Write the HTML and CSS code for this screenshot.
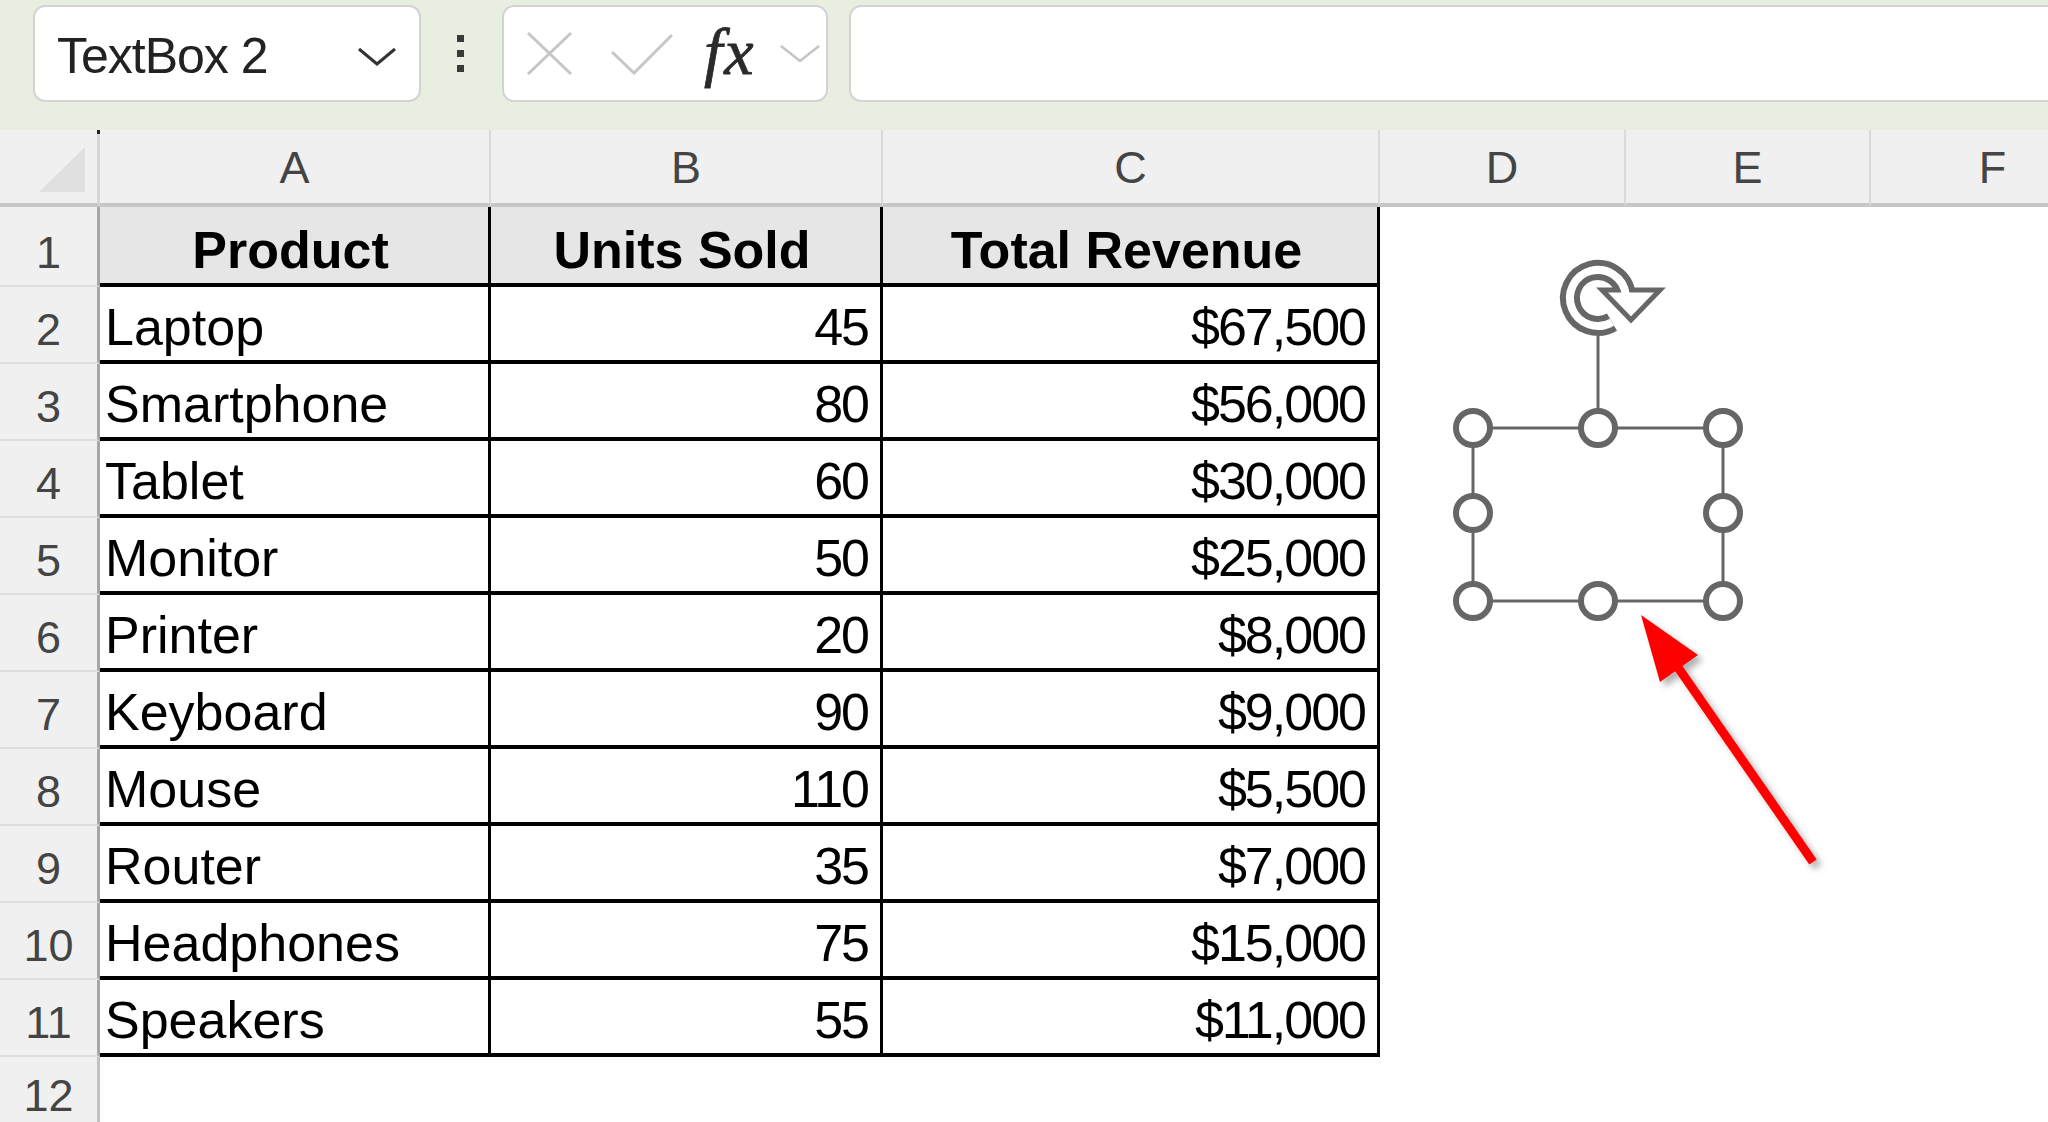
FILE: index.html
```html
<!DOCTYPE html>
<html lang="en">
<head>
    <meta charset="UTF-8">
    <meta name="viewport" content="width=device-width, initial-scale=1.0">
    <title>Sales sheet</title>
    <link rel="stylesheet" href="styles.css">
</head>
<body>
<div class="app">
    <div class="toolbar">
        <div class="namebox">
            <span>TextBox 2</span>
            <svg width="44" height="22" viewBox="0 0 44 22"><polyline points="4,4 22,19 40,4" fill="none" stroke="#333" stroke-width="3"/></svg>
        </div>
        <div class="dots"><span></span><span></span><span></span></div>
        <div class="fxbox">
            <svg width="47" height="45" viewBox="0 0 47 45"><path d="M2 2 L45 43 M45 2 L2 43" stroke="#c6c6c6" stroke-width="3" fill="none"/></svg>
            <svg class="ok" width="62" height="42" viewBox="0 0 62 42"><polyline points="1,19 23,40 61,2" fill="none" stroke="#c6c6c6" stroke-width="3"/></svg>
            <span class="fx">fx</span>
            <svg class="more" width="40" height="19" viewBox="0 0 40 19"><polyline points="1,2 20,17 39,2" fill="none" stroke="#c4c4c4" stroke-width="2.5"/></svg>
        </div>
        <div class="formula"></div>
    </div>

    <div class="sheet">
        <div class="row colhead">
            <div class="corner"><svg width="46" height="45" viewBox="0 0 46 45"><polygon points="46,0 46,45 0,45" fill="#e0e0e0"/></svg></div>
            <div>A</div><div>B</div><div>C</div><div>D</div><div>E</div><div>F</div>
        </div>
        <div class="row first">
            <div class="rh">1</div>
            <div class="c hd">Product</div><div class="c hd">Units Sold</div><div class="c hd">Total Revenue</div>
            <div></div><div></div><div></div>
        </div>
        <div class="row">
            <div class="rh">2</div>
            <div class="c">Laptop</div><div class="c num">45</div><div class="c num">$67,500</div>
            <div></div><div></div><div></div>
        </div>
        <div class="row">
            <div class="rh">3</div>
            <div class="c">Smartphone</div><div class="c num">80</div><div class="c num">$56,000</div>
            <div></div><div></div><div></div>
        </div>
        <div class="row">
            <div class="rh">4</div>
            <div class="c">Tablet</div><div class="c num">60</div><div class="c num">$30,000</div>
            <div></div><div></div><div></div>
        </div>
        <div class="row">
            <div class="rh">5</div>
            <div class="c">Monitor</div><div class="c num">50</div><div class="c num">$25,000</div>
            <div></div><div></div><div></div>
        </div>
        <div class="row">
            <div class="rh">6</div>
            <div class="c">Printer</div><div class="c num">20</div><div class="c num">$8,000</div>
            <div></div><div></div><div></div>
        </div>
        <div class="row">
            <div class="rh">7</div>
            <div class="c">Keyboard</div><div class="c num">90</div><div class="c num">$9,000</div>
            <div></div><div></div><div></div>
        </div>
        <div class="row">
            <div class="rh">8</div>
            <div class="c">Mouse</div><div class="c num">110</div><div class="c num">$5,500</div>
            <div></div><div></div><div></div>
        </div>
        <div class="row">
            <div class="rh">9</div>
            <div class="c">Router</div><div class="c num">35</div><div class="c num">$7,000</div>
            <div></div><div></div><div></div>
        </div>
        <div class="row">
            <div class="rh">10</div>
            <div class="c">Headphones</div><div class="c num">75</div><div class="c num">$15,000</div>
            <div></div><div></div><div></div>
        </div>
        <div class="row">
            <div class="rh">11</div>
            <div class="c">Speakers</div><div class="c num">55</div><div class="c num">$11,000</div>
            <div></div><div></div><div></div>
        </div>
        <div class="row last">
            <div class="rh">12</div>
            <div></div><div></div><div></div><div></div><div></div><div></div>
        </div>
    </div>

    <!-- selected text box with its handles, and the red pointer -->
    <svg class="overlay" width="460" height="660" viewBox="1400 240 460 660">
        <defs>
            <filter id="shadow" x="-30%" y="-30%" width="160%" height="160%">
                <feDropShadow dx="5" dy="5" stdDeviation="3" flood-color="#000" flood-opacity="0.3"/>
            </filter>
        </defs>
        <path d="M1612 322.2 A28 28 0 1 1 1625.7 294.1" fill="none" stroke="#666" stroke-width="20"/>
        <polygon points="1602,290 1660,290 1631,320" fill="#fff" stroke="#666" stroke-width="5" stroke-linejoin="miter"/>
        <path d="M1612 322.2 A28 28 0 1 1 1625.7 294.1" fill="none" stroke="#fff" stroke-width="8"/>
        <g stroke="#666" stroke-width="3" fill="none">
            <line x1="1598" y1="336" x2="1598" y2="410"/>
            <rect x="1473" y="428" width="250" height="173"/>
        </g>
        <g fill="#fff" stroke="#666" stroke-width="6">
            <circle cx="1473" cy="428" r="17"/>
            <circle cx="1598" cy="428" r="17"/>
            <circle cx="1723" cy="428" r="17"/>
            <circle cx="1473" cy="513" r="17"/>
            <circle cx="1723" cy="513" r="17"/>
            <circle cx="1473" cy="601" r="17"/>
            <circle cx="1598" cy="601" r="17"/>
            <circle cx="1723" cy="601" r="17"/>
        </g>
        <g filter="url(#shadow)">
            <line x1="1813" y1="862" x2="1677" y2="666" stroke="#f00" stroke-width="9"/>
            <polygon points="1641,615 1698,655 1660,682" fill="#f00"/>
        </g>
    </svg>
</div>
</body>
</html>
```

FILE: styles.css
```css
* {
    box-sizing: border-box;
}
body {
    margin: 0;
    font-family: "Liberation Sans", Arial, sans-serif;
    background: #fff;
}
.app {
    position: relative;
    width: 2048px;
    height: 1122px;
    overflow: hidden;
}

/* formula bar */
.toolbar {
    display: flex;
    align-items: flex-start;
    height: 130px;
    padding: 5px 0 0 33px;
    background: #e8efe0;
    overflow: hidden;
}
.namebox {
    display: flex;
    align-items: center;
    flex: none;
    width: 388px;
    height: 97px;
    padding: 5px 20px 0 22px;
    background: #fff;
    border: 2px solid #d3d3d3;
    border-radius: 12px;
    font-size: 50px;
    letter-spacing: -1px;
    line-height: 1;
    color: #222;
}
.namebox svg {
    margin-left: auto;
}
.dots {
    display: flex;
    flex-direction: column;
    gap: 8px;
    margin: 30px 0 0 36px;
}
.dots span {
    width: 7px;
    height: 7px;
    background: #3a3a3a;
}
.fxbox {
    display: flex;
    align-items: center;
    flex: none;
    width: 326px;
    height: 97px;
    margin-left: 38px;
    padding-left: 22px;
    background: #fff;
    border: 2px solid #d3d3d3;
    border-radius: 12px;
}
.fxbox .ok {
    margin-left: 38px;
}
.fx {
    width: 62px;
    margin-left: 31px;
    padding-bottom: 4px;
    font-family: "Liberation Serif", "Times New Roman", serif;
    font-style: italic;
    font-size: 66px;
    letter-spacing: 2px;
    line-height: 1;
    color: #2a2a2a;
    -webkit-text-stroke: 0.8px #2a2a2a;
}
.fxbox .more {
    margin-left: 14px;
}
.formula {
    flex: none;
    width: 1400px;
    height: 97px;
    margin-left: 21px;
    background: #fff;
    border: 2px solid #d3d3d3;
    border-radius: 12px;
}

/* grid */
.row {
    display: grid;
    grid-template-columns: 100px 391px 392px 497px 246px 245px 245px;
    height: 77px;
}
.row.first {
    height: 80px;
}
.colhead {
    background: #f0f0f0;
}
.colhead div {
    display: flex;
    justify-content: center;
    align-items: flex-end;
    padding-bottom: 13px;
    border-right: 2px solid #dadada;
    border-bottom: 4px solid #c6c6c6;
    font-size: 45px;
    line-height: 1;
    color: #444;
}
.colhead .corner {
    position: relative;
    display: block;
    padding: 17px 0 0 39px;
    border-right: 3px solid #d6d6d6;
}
.colhead .corner::after {
    content: "";
    position: absolute;
    right: -3px;
    top: 0;
    width: 3px;
    height: 4px;
    background: #222;
}
.rh {
    display: flex;
    justify-content: center;
    align-items: flex-end;
    padding-bottom: 10px;
    background: #f0f0f0;
    border-right: 3px solid #a6a6a6;
    border-bottom: 2px solid #dedede;
    font-size: 45px;
    line-height: 1;
    color: #444;
}
.last .rh {
    padding-bottom: 14px;
    border-right-color: #c2c2c2;
}
.c {
    display: flex;
    align-items: flex-end;
    padding: 0 12px 7px 5px;
    border-right: 3px solid #000;
    border-bottom: 4px solid #000;
    font-size: 52px;
    line-height: 1;
    color: #000;
    white-space: nowrap;
}
.c.num {
    justify-content: flex-end;
    letter-spacing: -2px;
}
.c.hd {
    justify-content: center;
    font-weight: bold;
    background: #e6e6e6;
}

.overlay {
    position: absolute;
    left: 1400px;
    top: 240px;
}
```
